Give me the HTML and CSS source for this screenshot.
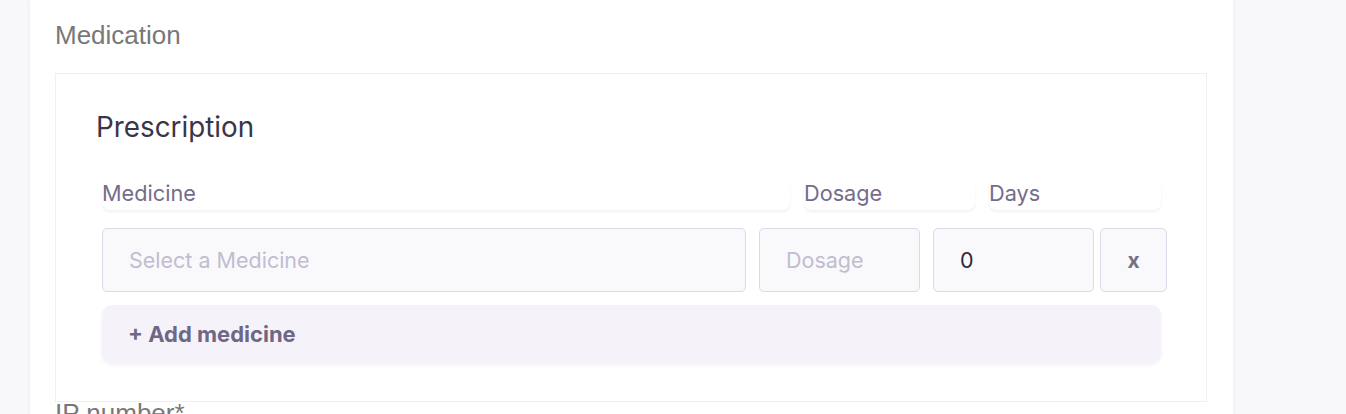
FILE: index.html
```html
<!DOCTYPE html>
<html lang="en">
<head>
<meta charset="utf-8">
<title>Medication</title>
<link rel="stylesheet" href="styles.css">
</head>
<body>
<div class="page">
  <div class="card">
    <div class="field-title">Medication</div>
    <div class="presc-box">
      <h2 class="presc-title">Prescription</h2>
      <div class="label-row">
        <div class="col-label label-medicine">Medicine</div>
        <div class="col-label label-dosage">Dosage</div>
        <div class="col-label label-days">Days</div>
      </div>
      <div class="input-row">
        <input class="field in-medicine" type="text" placeholder="Select a Medicine">
        <input class="field in-dosage" type="text" placeholder="Dosage">
        <input class="field in-days" type="text" value="0">
        <button class="remove-btn" type="button">x</button>
      </div>
      <button class="add-btn" type="button">+ Add medicine</button>
    </div>
    <div class="field-title next-title">IP number*</div>
  </div>
</div>
</body>
</html>
```

FILE: styles.css
```css
html, body {
  margin: 0;
  padding: 0;
}
body {
  background: #f8f8fb;
  font-family: "Inter", "Liberation Sans", sans-serif;
  overflow: hidden;
}
.page {
  padding-left: 30px;
}
.card {
  width: 1203px;
  background: #ffffff;
  box-shadow: 0 0 6px rgba(0, 0, 0, 0.05);
  padding: 19px 0 0 25px;
  box-sizing: border-box;
  height: 430px;
}
.field-title {
  font-family: "Liberation Sans", Arial, sans-serif;
  font-size: 26px;
  line-height: 32px;
  color: #787878;
  margin-left: 0;
}
.presc-box {
  margin-top: 22px;
  width: 1152px;
  box-sizing: border-box;
  border: 1px solid #f0f0f2;
  padding: 36px 39px 38px 40px;
}
.presc-title {
  margin: 0;
  font-family: "Inter", sans-serif;
  font-weight: 400;
  font-size: 27.8px;
  line-height: 34px;
  color: #3b3548;
}
.label-row {
  display: flex;
  gap: 14px;
  margin: 37px 0 0 6px;
  width: 1059px;
}
.col-label {
  height: 29px;
  line-height: 25px;
  font-size: 21.7px;
  color: #756c8a;
  border-radius: 8px;
  box-shadow: 0 2px 3px rgba(40, 30, 80, 0.06);
  background: #fff;
  white-space: nowrap;
}
.label-medicine { flex: 0 0 688px; }
.label-dosage { flex: 0 0 171px; }
.label-days { flex: 0 0 172px; }
.input-row {
  display: flex;
  margin: 18px 0 0 6px;
  height: 64px;
}
.field {
  box-sizing: border-box;
  height: 64px;
  border: 1px solid #ddd8ea;
  border-radius: 5px;
  background: #f9f9fc;
  font-family: "Inter", sans-serif;
  font-size: 21.5px;
  color: #2d2a3a;
  padding: 0 26px;
  outline: none;
}
.field::placeholder {
  color: #c2bcd1;
}
.in-medicine { width: 644px; margin-right: 13px; }
.in-dosage { width: 161px; margin-right: 13px; }
.in-days { width: 161px; margin-right: 6px; }
.remove-btn {
  box-sizing: border-box;
  width: 67px;
  height: 64px;
  border: 1px solid #ddd8ea;
  border-radius: 5px;
  background: #f9f9fc;
  font-family: "Inter", sans-serif;
  font-weight: 700;
  font-size: 21px;
  color: #776f8a;
  padding: 0;
}
.add-btn {
  display: block;
  margin: 13px 0 0 6px;
  width: 1059px;
  height: 58px;
  border: none;
  border-radius: 10px;
  background: #f5f3f9;
  box-shadow: 0 2px 4px rgba(40, 30, 80, 0.06);
  text-align: left;
  padding: 0 26px;
  font-family: "Inter", sans-serif;
  font-weight: 700;
  font-size: 22px;
  color: #6f6785;
}
.next-title {
  line-height: 22px;
  margin-top: 0;
}
```
